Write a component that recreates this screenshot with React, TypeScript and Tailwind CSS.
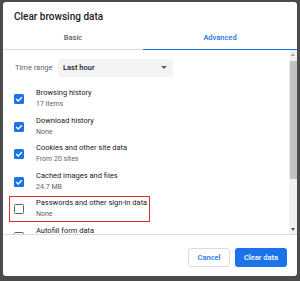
import React from "react";

const rows = [
  { label: "Browsing history", sub: "17 items", checked: true },
  { label: "Download history", sub: "None", checked: true },
  { label: "Cookies and other site data", sub: "From 20 sites", checked: true },
  { label: "Cached images and files", sub: "24.7 MB", checked: true },
  { label: "Passwords and other sign-in data", sub: "None", checked: false, marked: true },
  { label: "Autofill form data", sub: "", checked: false },
];

const Box = ({ checked }: { checked: boolean }) =>
  checked ? (
    <svg width="10" height="10" viewBox="0 0 10 10" className="shrink-0 mt-[6px]">
      <rect x="0" y="0" width="10" height="10" rx="1.5" fill="#1a73e8" />
      <path d="M2.2 5.1 L4.2 7 L7.9 3.2" stroke="#fff" strokeWidth="1.4" fill="none" />
    </svg>
  ) : (
    <span className="block w-[10px] h-[10px] mt-[6px] shrink-0 rounded-[1.5px] border-[1.5px] border-[#5f6368]" />
  );

export default function App() {
  return (
    <div className="w-[300px] h-[281px] bg-[#4b4b4b] pt-[2px] pl-[3px] overflow-hidden" style={{ fontFamily: "Roboto, 'Liberation Sans', sans-serif" }}>
      <div className="w-[294px] h-[274px] bg-white rounded-[3px] flex flex-col overflow-hidden">
        {/* title */}
        <div className="h-[25px] pt-[9px] pl-[11px] text-[10px] leading-[12px] font-medium text-[#202124]">Clear browsing data</div>
        {/* tabs */}
        <div className="flex h-[23px] border-b border-[#dadce0] text-[7.5px]">
          <div className="w-[140px] flex items-center justify-center text-[#5f6368] font-medium">Basic</div>
          <div className="flex-1 flex items-center justify-center text-[#1a73e8] font-medium border-b-[1.5px] border-[#1a73e8] -mb-px">Advanced</div>
        </div>
        {/* scroll area */}
        <div className="flex h-[185px] border-b border-[#dadce0]">
          <div className="flex-1 overflow-hidden">
            <div className="flex items-center h-[25px] mt-[5px] pl-[12px]">
              <span className="text-[7.5px] text-[#5f6368] w-[43px]">Time range</span>
              <div className="w-[115px] h-[18px] bg-[#f1f3f4] rounded-[2px] flex items-center justify-between pl-[5px] pr-[6px] text-[7.5px] font-medium text-[#202124]">
                <span>Last hour</span>
                <span className="w-0 h-0 border-l-[3px] border-r-[3px] border-t-[3px] border-l-transparent border-r-transparent border-t-[#5f6368]" />
              </div>
            </div>
            <div className="pt-[7px]">
              {rows.map((r) => (
                <div key={r.label} className="h-[27.5px] pl-[7px] flex items-start">
                  <div className={`flex items-start h-[24px] pt-[1px] pl-[4px] pr-[2px] ${r.marked ? "outline-[1.5px] outline outline-[#d93025]" : ""}`}>
                    <Box checked={r.checked} />
                    <div className="ml-[12px] flex flex-col">
                      <span className="text-[7.5px] leading-[10px] text-[#202124]">{r.label}</span>
                      {r.sub && <span className="text-[7px] leading-[12px] text-[#5f6368]">{r.sub}</span>}
                    </div>
                  </div>
                </div>
              ))}
            </div>
          </div>
          {/* scrollbar */}
          <div className="w-[8px] bg-[#f1f1f1] flex flex-col items-center">
            <div className="h-[9px] flex items-center">
              <span className="w-0 h-0 border-l-[2.5px] border-r-[2.5px] border-b-[3px] border-l-transparent border-r-transparent border-b-[#a3a3a3]" />
            </div>
            <div className="w-[7px] h-[118px] bg-[#c1c1c1] mt-[2px]" />
            <div className="flex-1" />
            <div className="h-[9px] flex items-center">
              <span className="w-0 h-0 border-l-[2.5px] border-r-[2.5px] border-t-[3px] border-l-transparent border-r-transparent border-t-[#505050]" />
            </div>
          </div>
        </div>
        {/* footer */}
        <div className="flex justify-end gap-[5px] pt-[13px] pr-[10px] text-[7.5px] font-medium">
          <button className="w-[42px] h-[19px] rounded-[3px] border border-[#dadce0] text-[#1a73e8] bg-white">Cancel</button>
          <button className="w-[52px] h-[19px] rounded-[3px] bg-[#1a73e8] text-white">Clear data</button>
        </div>
      </div>
    </div>
  );
}
